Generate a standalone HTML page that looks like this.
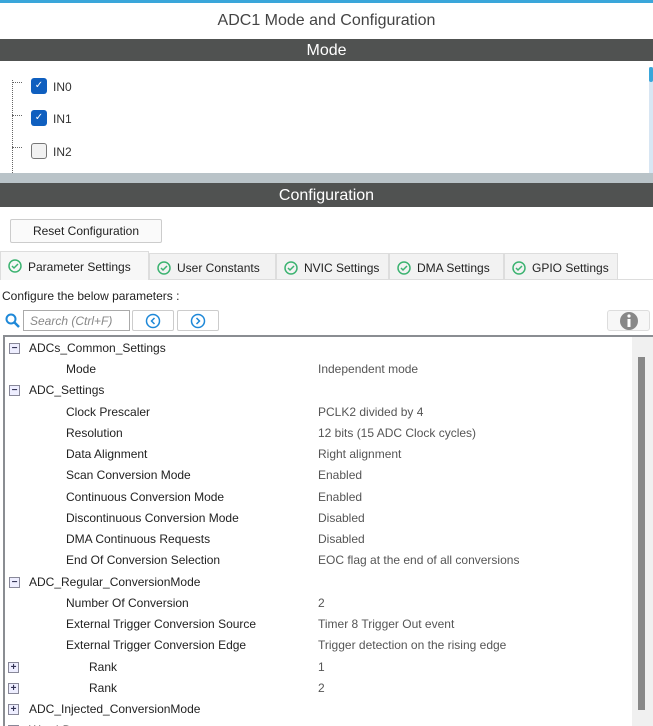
<!DOCTYPE html><html><head><style>
*{margin:0;padding:0;box-sizing:border-box}
body{width:653px;height:726px;overflow:hidden;background:#fff;font-family:"Liberation Sans","DejaVu Sans",sans-serif;font-size:12px;color:#222;position:relative}
.a{position:absolute}
.bar{background:#505251;color:#fff;text-align:center;font-size:16px;left:0;width:653px}
.cb{width:16px;height:16px;border-radius:3px;left:31px}
.on{background:#0f5fbf}
.off{background:#f2f2f2;border:1px solid #777}
.lbl{left:53px;font-size:12px;color:#333}
.tab{top:253px;height:27px;border:1px solid #ddd;background:#f2f2f2;font-size:12px;padding:7px 0 0 27px;color:#222}
.tab svg{position:absolute;left:7px;top:7px}
.r{position:absolute;left:0;width:630px;height:21px;line-height:21px;color:#222}
.r .v{position:absolute;left:313px;color:#555}
.pm{position:absolute;left:4px;top:5px;width:11px;height:11px;border:1px solid #889;background:#eef;font-size:10px;line-height:9px;text-align:center;color:#335;font-weight:bold}
</style></head><body>
<div class="a" style="left:0;top:0;width:653px;height:3px;background:#3aa6da"></div>
<div class="a" style="left:0;top:12px;width:653px;text-align:center;font-size:16px;color:#444">ADC1 Mode and Configuration</div>
<div class="a bar" style="top:39px;height:22px;line-height:23px">Mode</div>
<div class="a" style="left:12px;top:80px;height:93px;border-left:1px dotted #666"></div>
<div class="a" style="left:12px;top:82px;width:10px;border-top:1px dotted #666"></div>
<div class="a" style="left:12px;top:115px;width:10px;border-top:1px dotted #666"></div>
<div class="a" style="left:12px;top:147px;width:10px;border-top:1px dotted #666"></div>
<div class="a cb on" style="top:78px;color:#fff;font-size:10px;text-align:center;line-height:16px">✓</div>
<div class="a cb on" style="top:110px;color:#fff;font-size:10px;text-align:center;line-height:16px">✓</div>
<div class="a cb off" style="top:143px"></div>
<div class="a lbl" style="top:80px">IN0</div>
<div class="a lbl" style="top:112px">IN1</div>
<div class="a lbl" style="top:145px">IN2</div>
<div class="a" style="left:649px;top:67px;width:4px;height:106px;background:#d8e6f3"></div>
<div class="a" style="left:649px;top:67px;width:4px;height:15px;background:#3aa6da;border-radius:2px"></div>
<div class="a" style="left:0;top:173px;width:653px;height:10px;background:#b9c3c8"></div>
<div class="a bar" style="top:183px;height:24px;line-height:26px">Configuration</div>
<div class="a" style="left:10px;top:219px;width:152px;height:24px;border:1px solid #ccc;border-radius:2px;background:#fafafa;text-align:center;line-height:23px">Reset Configuration</div>
<div class="a" style="left:0;top:279px;width:653px;border-top:1px solid #ddd"></div>
<div class="a tab" style="left:0;width:149px;top:251px;height:29px;background:#f7f7f7;border-bottom:none;padding-top:8px"><svg width="14" height="14"><circle cx="7" cy="7" r="6" fill="none" stroke="#3cb371" stroke-width="1.5"/><path d="M4 7l2 2 4-4" fill="none" stroke="#3cb371" stroke-width="1.5"/></svg>Parameter Settings</div>
<div class="a tab" style="left:149px;width:127px"><svg width="14" height="14"><circle cx="7" cy="7" r="6" fill="none" stroke="#3cb371" stroke-width="1.5"/><path d="M4 7l2 2 4-4" fill="none" stroke="#3cb371" stroke-width="1.5"/></svg>User Constants</div>
<div class="a tab" style="left:276px;width:113px"><svg width="14" height="14"><circle cx="7" cy="7" r="6" fill="none" stroke="#3cb371" stroke-width="1.5"/><path d="M4 7l2 2 4-4" fill="none" stroke="#3cb371" stroke-width="1.5"/></svg>NVIC Settings</div>
<div class="a tab" style="left:389px;width:115px"><svg width="14" height="14"><circle cx="7" cy="7" r="6" fill="none" stroke="#3cb371" stroke-width="1.5"/><path d="M4 7l2 2 4-4" fill="none" stroke="#3cb371" stroke-width="1.5"/></svg>DMA Settings</div>
<div class="a tab" style="left:504px;width:114px"><svg width="14" height="14"><circle cx="7" cy="7" r="6" fill="none" stroke="#3cb371" stroke-width="1.5"/><path d="M4 7l2 2 4-4" fill="none" stroke="#3cb371" stroke-width="1.5"/></svg>GPIO Settings</div>
<div class="a" style="left:2px;top:289px">Configure the below parameters :</div>
<svg class="a" style="left:5px;top:313px" width="16" height="16"><circle cx="6" cy="6" r="4.5" fill="none" stroke="#1e88d8" stroke-width="2"/><path d="M9 9l5 5" stroke="#1e88d8" stroke-width="2.5"/></svg>
<div class="a" style="left:23px;top:310px;width:107px;height:21px;border:1px solid #aaa;color:#888;font-style:italic;padding:3px 0 0 6px">Search (Ctrl+F)</div>
<div class="a" style="left:132px;top:310px;width:42px;height:21px;border:1px solid #ccc;border-radius:2px"><svg style="position:absolute;left:12px;top:2px" width="16" height="16"><circle cx="8" cy="8" r="6.5" fill="none" stroke="#1e88d8" stroke-width="1.5"/><path d="M9.5 5l-3 3 3 3" fill="none" stroke="#1e88d8" stroke-width="1.5"/></svg></div>
<div class="a" style="left:177px;top:310px;width:42px;height:21px;border:1px solid #ccc;border-radius:2px"><svg style="position:absolute;left:12px;top:2px" width="16" height="16"><circle cx="8" cy="8" r="6.5" fill="none" stroke="#1e88d8" stroke-width="1.5"/><path d="M6.5 5l3 3-3 3" fill="none" stroke="#1e88d8" stroke-width="1.5"/></svg></div>
<div class="a" style="left:607px;top:310px;width:43px;height:21px;border:1px solid #ddd;border-radius:3px;background:#f7f7f7"><svg style="position:absolute;left:11px;top:0" width="20" height="20"><circle cx="10" cy="10" r="9" fill="#888"/><rect x="8.5" y="8" width="3" height="8" fill="#fff"/><circle cx="10" cy="5" r="1.6" fill="#fff"/></svg></div>
<div class="a" style="left:3px;top:335px;width:650px;height:391px;border:2px solid #8a8d92;border-right:none;border-bottom:none;overflow:hidden">
<div class="a" style="left:627px;top:0;width:21px;height:391px;background:#f0f0f0"></div>
<div class="a" style="left:633px;top:20px;width:7px;height:353px;background:#888"></div>
<div class="r" style="top:1px"><span class="pm">−</span><span style="position:absolute;left:24px">ADCs_Common_Settings</span></div>
<div class="r" style="top:22px"><span style="position:absolute;left:61px">Mode</span><span class="v">Independent mode</span></div>
<div class="r" style="top:43px"><span class="pm">−</span><span style="position:absolute;left:24px">ADC_Settings</span></div>
<div class="r" style="top:65px"><span style="position:absolute;left:61px">Clock Prescaler</span><span class="v">PCLK2 divided by 4</span></div>
<div class="r" style="top:86px"><span style="position:absolute;left:61px">Resolution</span><span class="v">12 bits (15 ADC Clock cycles)</span></div>
<div class="r" style="top:107px"><span style="position:absolute;left:61px">Data Alignment</span><span class="v">Right alignment</span></div>
<div class="r" style="top:128px"><span style="position:absolute;left:61px">Scan Conversion Mode</span><span class="v">Enabled</span></div>
<div class="r" style="top:150px"><span style="position:absolute;left:61px">Continuous Conversion Mode</span><span class="v">Enabled</span></div>
<div class="r" style="top:171px"><span style="position:absolute;left:61px">Discontinuous Conversion Mode</span><span class="v">Disabled</span></div>
<div class="r" style="top:192px"><span style="position:absolute;left:61px">DMA Continuous Requests</span><span class="v">Disabled</span></div>
<div class="r" style="top:213px"><span style="position:absolute;left:61px">End Of Conversion Selection</span><span class="v">EOC flag at the end of all conversions</span></div>
<div class="r" style="top:235px"><span class="pm">−</span><span style="position:absolute;left:24px">ADC_Regular_ConversionMode</span></div>
<div class="r" style="top:256px"><span style="position:absolute;left:61px">Number Of Conversion</span><span class="v">2</span></div>
<div class="r" style="top:277px"><span style="position:absolute;left:61px">External Trigger Conversion Source</span><span class="v">Timer 8 Trigger Out event</span></div>
<div class="r" style="top:298px"><span style="position:absolute;left:61px">External Trigger Conversion Edge</span><span class="v">Trigger detection on the rising edge</span></div>
<div class="r" style="top:320px"><span class="pm" style="left:3px">+</span><span style="position:absolute;left:84px">Rank</span><span class="v">1</span></div>
<div class="r" style="top:341px"><span class="pm" style="left:3px">+</span><span style="position:absolute;left:84px">Rank</span><span class="v">2</span></div>
<div class="r" style="top:362px"><span class="pm" style="left:3px">+</span><span style="position:absolute;left:24px">ADC_Injected_ConversionMode</span></div>
<div class="r" style="top:383px"><span class="pm" style="left:3px">+</span><span style="position:absolute;left:24px">WatchDog</span></div>
</div>
</body></html>
